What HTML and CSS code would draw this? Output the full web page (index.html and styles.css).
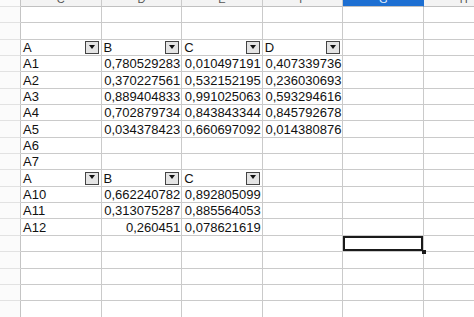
FILE: index.html
```html
<!DOCTYPE html>
<html lang="en">
<head>
    <meta charset="UTF-8">
    <meta name="viewport" content="width=device-width, initial-scale=1.0">
    <title>Sheet1</title>
    <link rel="stylesheet" href="styles.css">
</head>
<body>
    <div class="sheet">
        <div class="row head">
            <div class="rh"></div>
            <div class="ch"><span>C</span></div>
            <div class="ch"><span>D</span></div>
            <div class="ch"><span>E</span></div>
            <div class="ch"><span>F</span></div>
            <div class="ch active"><span>G</span></div>
            <div class="ch"><span>H</span></div>
        </div>
        <div class="row"><div class="rh"></div><div class="c"></div><div class="c"></div><div class="c"></div><div class="c"></div><div class="c"></div><div class="c"></div></div>
        <div class="row"><div class="rh"></div><div class="c"></div><div class="c"></div><div class="c"></div><div class="c"></div><div class="c"></div><div class="c"></div></div>

        <!-- first filtered range -->
        <div class="row">
            <div class="rh"></div>
            <div class="c">A<span class="filter"></span></div>
            <div class="c">B<span class="filter"></span></div>
            <div class="c">C<span class="filter"></span></div>
            <div class="c">D<span class="filter"></span></div>
            <div class="c"></div><div class="c"></div>
        </div>
        <div class="row"><div class="rh"></div><div class="c">A1</div><div class="c num">0,780529283</div><div class="c num">0,010497191</div><div class="c num">0,407339736</div><div class="c"></div><div class="c"></div></div>
        <div class="row"><div class="rh"></div><div class="c">A2</div><div class="c num">0,370227561</div><div class="c num">0,532152195</div><div class="c num">0,236030693</div><div class="c"></div><div class="c"></div></div>
        <div class="row"><div class="rh"></div><div class="c">A3</div><div class="c num">0,889404833</div><div class="c num">0,991025063</div><div class="c num">0,593294616</div><div class="c"></div><div class="c"></div></div>
        <div class="row"><div class="rh"></div><div class="c">A4</div><div class="c num">0,702879734</div><div class="c num">0,843843344</div><div class="c num">0,845792678</div><div class="c"></div><div class="c"></div></div>
        <div class="row"><div class="rh"></div><div class="c">A5</div><div class="c num">0,034378423</div><div class="c num">0,660697092</div><div class="c num">0,014380876</div><div class="c"></div><div class="c"></div></div>
        <div class="row"><div class="rh"></div><div class="c">A6</div><div class="c"></div><div class="c"></div><div class="c"></div><div class="c"></div><div class="c"></div></div>
        <div class="row"><div class="rh"></div><div class="c">A7</div><div class="c"></div><div class="c"></div><div class="c"></div><div class="c"></div><div class="c"></div></div>

        <!-- second filtered range -->
        <div class="row">
            <div class="rh"></div>
            <div class="c">A<span class="filter"></span></div>
            <div class="c">B<span class="filter"></span></div>
            <div class="c">C<span class="filter"></span></div>
            <div class="c"></div><div class="c"></div><div class="c"></div>
        </div>
        <div class="row"><div class="rh"></div><div class="c">A10</div><div class="c num">0,662240782</div><div class="c num">0,892805099</div><div class="c"></div><div class="c"></div><div class="c"></div></div>
        <div class="row"><div class="rh"></div><div class="c">A11</div><div class="c num">0,313075287</div><div class="c num">0,885564053</div><div class="c"></div><div class="c"></div><div class="c"></div></div>
        <div class="row"><div class="rh"></div><div class="c">A12</div><div class="c num">0,260451</div><div class="c num">0,078621619</div><div class="c"></div><div class="c"></div><div class="c"></div></div>

        <div class="row"><div class="rh"></div><div class="c"></div><div class="c"></div><div class="c"></div><div class="c"></div><div class="c cursor"><span class="handle"></span></div><div class="c"></div></div>
        <div class="row"><div class="rh"></div><div class="c"></div><div class="c"></div><div class="c"></div><div class="c"></div><div class="c"></div><div class="c"></div></div>
        <div class="row"><div class="rh"></div><div class="c"></div><div class="c"></div><div class="c"></div><div class="c"></div><div class="c"></div><div class="c"></div></div>
        <div class="row"><div class="rh"></div><div class="c"></div><div class="c"></div><div class="c"></div><div class="c"></div><div class="c"></div><div class="c"></div></div>
        <div class="row"><div class="rh"></div><div class="c"></div><div class="c"></div><div class="c"></div><div class="c"></div><div class="c"></div><div class="c"></div></div>
    </div>
</body>
</html>
```

FILE: styles.css
```css
body {
    margin: 0;
    padding: 0;
    background-color: #fff;
    font-family: "Liberation Sans", Arial, sans-serif;
    font-size: 13px;
    color: #111;
    overflow: hidden;
}
.sheet {
    width: 474px;
    overflow: hidden;
}
.row {
    display: grid;
    grid-template-columns: 21px repeat(6, 80.6px);
    height: 16.35px;
}
.row.head {
    height: 7px;
}
.rh, .c, .ch {
    box-sizing: border-box;
    border-right: 1px solid #cacaca;
    border-bottom: 1px solid #cacaca;
    overflow: hidden;
}
.rh {
    background-color: #fbfbfb;
    border-right-color: #c4c4c4;
    border-bottom-color: #e2e2e2;
}

/* column letters, only their lower part is in view */
.ch {
    background-color: #f3f3f3;
    border-bottom-color: #c0c0c0;
    color: #555;
    font-size: 11px;
    display: flex;
    align-items: flex-end;
    justify-content: center;
}
.ch span {
    line-height: 11px;
    margin-bottom: 1px;
}
.ch.active {
    background-color: #1d6fd2;
    border-right-color: #1d6fd2;
    color: #e8f0fb;
}

.c {
    display: flex;
    align-items: flex-end;
    padding: 0 1px 1px 2px;
    line-height: 13px;
    white-space: nowrap;
}
.c.num {
    justify-content: flex-end;
}

/* autofilter dropdown button */
.filter {
    box-sizing: border-box;
    width: 14px;
    height: 13px;
    margin-left: auto;
    margin-right: 1px;
    border: 1px solid #444;
    background-color: #e4e4e4;
    display: flex;
    align-items: center;
    justify-content: center;
}
.filter::after {
    content: "";
    width: 0;
    height: 0;
    margin-bottom: 2px;
    border-left: 3.5px solid transparent;
    border-right: 3.5px solid transparent;
    border-top: 4px solid #111;
}

/* selected cell */
.cursor {
    position: relative;
    overflow: visible;
    box-shadow: inset 0 0 0 2px #1a1a1a;
}
.handle {
    position: absolute;
    right: -3px;
    bottom: -3px;
    width: 4px;
    height: 4px;
    background-color: #1a1a1a;
}
```
